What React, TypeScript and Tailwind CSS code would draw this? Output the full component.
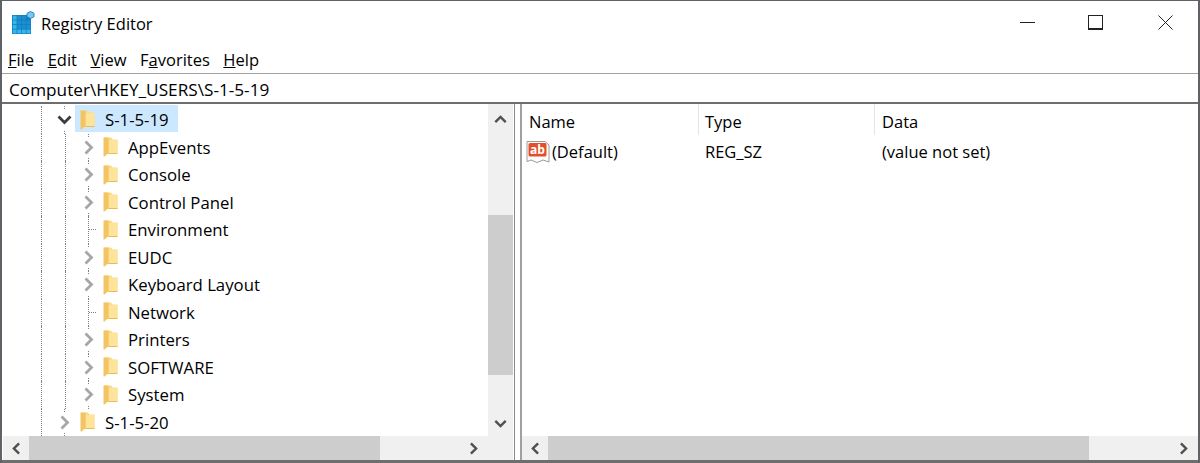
import type { ReactNode } from "react";

const font = "font-['Open_Sans','Noto_Sans',sans-serif]";

function Chevron({ dir, className }: { dir: "up" | "down" | "left" | "right"; className: string }) {
    const paths = {
        up: "M1.5 10.5 L7.5 4.5 L13.5 10.5",
        down: "M1.5 4.5 L7.5 10.5 L13.5 4.5",
        left: "M10.5 1.5 L4.5 7.5 L10.5 13.5",
        right: "M4.5 1.5 L10.5 7.5 L4.5 13.5",
    };
    return (
        <svg viewBox="0 0 15 15" className={className} fill="none" stroke="currentColor" strokeWidth="2.8">
            <path d={paths[dir]} />
        </svg>
    );
}

function Folder() {
    return (
        <svg viewBox="0 0 15 20" className="w-[15px] h-[20px] mr-[2px] shrink-0">
            <path d="M1 0.5 H8 L9.5 2.5 H14.5 V17 H1 Z" fill="#fbdb82" />
            <path d="M6 3 H14.5 V16.5 H6 Z" fill="#fde49a" />
            <path d="M0.5 0.5 H5.5 V16 L1.5 19.5 H0.5 Z" fill="#f3c464" />
            <path d="M5.5 16 H14.5 V17 H5.5 Z" fill="#e9bb5c" />
        </svg>
    );
}

function RegeditIcon() {
    const cells = [0, 1, 2, 3].flatMap((y) => [0, 1, 2, 3].map((x) => ({ x, y })));
    return (
        <svg viewBox="0 0 23 23" className="w-[23px] h-[23px] shrink-0 -mt-[3px]">
            <rect x="0" y="4" width="19" height="19" fill="#0f7fc0" />
            {cells
                .filter((c) => !(c.x === 3 && c.y === 0))
                .map((c) => (
                    <rect
                        key={`${c.x}-${c.y}`}
                        x={0.8 + c.x * 4.6}
                        y={4.8 + c.y * 4.6}
                        width="3.8"
                        height="3.8"
                        fill={c.y === 3 || c.x === 0 ? "#38b6ec" : "#1d8fd0"}
                    />
                ))}
            <path d="M18.5 0.5 L22 2.3 V5.7 L18.5 7.5 L15 5.7 V2.3 Z" fill="#7cc8ec" stroke="#1b8ac8" strokeWidth="1" />
        </svg>
    );
}

function StringIcon() {
    return (
        <svg viewBox="0 0 24 24" className="w-[24px] h-[24px] shrink-0">
            <path d="M1 1.5 H19 L23 5 V22 L17 20 L11 22.5 L5 20 L1 21.5 Z" fill="#fff" stroke="#9a9a9a" strokeWidth="1" />
            <rect x="2.5" y="3" width="18" height="13.5" rx="1.5" fill="#e2502b" />
            <text x="11.5" y="14" textAnchor="middle" fontSize="12" fontWeight="700" fill="#fff" fontFamily="Open Sans">
                ab
            </text>
        </svg>
    );
}

function Expander({ type }: { type: "open" | "closed" | "none" }) {
    if (type === "none") {
        return (
            <div className="self-stretch w-[8px] ml-[8px] shrink-0 flex items-center border-l border-dotted border-[#808080]">
                <div className="w-full border-t border-dotted border-[#808080]" />
            </div>
        );
    }
    return (
        <div className="self-stretch w-[16px] shrink-0 flex flex-col items-center justify-between">
            <div className="h-[3px] w-0 border-l border-dotted border-[#808080] ml-px" />
            {type === "open" ? (
                <Chevron dir="down" className="w-[15px] h-[15px] text-[#3c3c3c]" />
            ) : (
                <Chevron dir="right" className="w-[15px] h-[15px] text-[#a6a6a6]" />
            )}
            <div className="h-[3px] w-0 border-l border-dotted border-[#808080] ml-px" />
        </div>
    );
}

function TreeRow({
    level,
    label,
    expander,
    selected,
}: {
    level: 1 | 2;
    label: string;
    expander: "open" | "closed" | "none";
    selected?: boolean;
}) {
    const body = (
        <>
            <span className="flex ml-[5px]">
                <Folder />
            </span>
            <span className={`ml-[8px] text-black ${selected ? "pr-[9px]" : "pr-[3px]"}`}>{label}</span>
        </>
    );
    return (
        <div className="flex items-center h-[27.5px] pl-[39px] text-[16.75px]">
            <div className={`self-stretch border-l border-dotted border-[#808080] ${level === 1 ? "w-[15px]" : "w-[24px]"}`} />
            {level === 2 && <div className="self-stretch w-[15px] border-l border-dotted border-[#808080]" />}
            <Expander type={expander} />
            {selected ? (
                <div className="flex items-center h-[27px] mb-[2px] pt-[2px] bg-[#cce8ff] ml-[3px]">{body}</div>
            ) : (
                <div className={`flex items-center ${level === 1 ? "ml-[3px]" : "ml-[2px]"}`}>{body}</div>
            )}
        </div>
    );
}

function ScrollTrack({ children, className }: { children: ReactNode; className: string }) {
    return <div className={`bg-[#f0f0f0] flex shrink-0 ${className}`}>{children}</div>;
}

const subkeys: { label: string; expander: "closed" | "none" }[] = [
    { label: "AppEvents", expander: "closed" },
    { label: "Console", expander: "closed" },
    { label: "Control Panel", expander: "closed" },
    { label: "Environment", expander: "none" },
    { label: "EUDC", expander: "closed" },
    { label: "Keyboard Layout", expander: "closed" },
    { label: "Network", expander: "none" },
    { label: "Printers", expander: "closed" },
    { label: "SOFTWARE", expander: "closed" },
    { label: "System", expander: "closed" },
];

export default function App() {
    return (
        <div className={`${font} w-[1200px] h-[463px] bg-white text-black text-[16.5px] flex flex-col overflow-hidden border-t border-[#5f6368] border-x-2`}>
            {/* title bar */}
            <div className="flex items-center h-[46px] shrink-0 pl-[10px]">
                <RegeditIcon />
                <span className="ml-[6px]">Registry Editor</span>
                <div className="ml-auto flex items-center h-full pb-[3px]">
                    <div className="w-[15px] border-t border-[#222] mr-[53px]" />
                    <div className="w-[15px] h-[15px] border border-b-2 border-[#222] mr-[55px]" />
                    <svg viewBox="0 0 15 15" className="w-[15px] h-[15px] mr-[25px]" stroke="#222" strokeWidth="1">
                        <path d="M0.5 0.5 L14.5 14.5 M14.5 0.5 L0.5 14.5" />
                    </svg>
                </div>
            </div>

            {/* menu */}
            <div className="flex items-center h-[26px] shrink-0 pl-[6px] gap-[13.5px]">
                <span><u>F</u>ile</span>
                <span><u>E</u>dit</span>
                <span><u>V</u>iew</span>
                <span>F<u>a</u>vorites</span>
                <span><u>H</u>elp</span>
            </div>

            {/* address bar */}
            <div className="flex items-center h-[31px] shrink-0 pl-[7px] pt-[3px] text-[17.2px] border-t border-[#a0a0a0] border-b-2 border-b-[#6e6e6e]">
                Computer\HKEY_USERS\S-1-5-19
            </div>

            <div className="flex flex-1 min-h-0 border-b-[3px] border-[#6e6e6e]">
                {/* tree pane */}
                <div className="flex flex-col w-[513px] shrink-0 pr-px border-r border-[#8a8a8a] min-h-0">
                    <div className="flex flex-1 min-h-0">
                        <div className="flex-1 min-w-0 overflow-hidden pt-[2px]">
                            <TreeRow level={1} label="S-1-5-19" expander="open" selected />
                            {subkeys.map((k) => (
                                <TreeRow key={k.label} level={2} label={k.label} expander={k.expander} />
                            ))}
                            <TreeRow level={1} label="S-1-5-20" expander="closed" />
                        </div>
                        <ScrollTrack className="flex-col w-[25px]">
                            <div className="h-[30px] flex items-center justify-center">
                                <Chevron dir="up" className="w-[13px] h-[13px] text-[#505050]" />
                            </div>
                            <div className="h-[81px]" />
                            <div className="h-[160px] bg-[#cdcdcd]" />
                            <div className="flex-1" />
                            <div className="h-[25px] flex items-center justify-center">
                                <Chevron dir="down" className="w-[13px] h-[13px] text-[#505050]" />
                            </div>
                        </ScrollTrack>
                    </div>
                    <ScrollTrack className="h-[24px] items-stretch ml-px">
                        <div className="w-[26px] flex items-center justify-center">
                            <Chevron dir="left" className="w-[13px] h-[13px] text-[#505050]" />
                        </div>
                        <div className="w-[351px] bg-[#cdcdcd]" />
                        <div className="flex-1" />
                        <div className="w-[25px] flex items-center justify-center mr-[25px] pr-[5px]">
                            <Chevron dir="right" className="w-[13px] h-[13px] text-[#505050]" />
                        </div>
                    </ScrollTrack>
                </div>

                {/* splitter */}
                <div className="w-[7px] shrink-0 border-r-2 border-[#a0a0a0]" />

                {/* values pane */}
                <div className="flex flex-col flex-1 min-w-0">
                    <div className="flex-1 min-h-0">
                        <div className="flex h-[34px] items-start">
                            <div className="w-[177px] h-[31px] flex items-center pl-[7px] pt-[6px] border-r border-[#e5e5e5]">Name</div>
                            <div className="w-[176px] h-[31px] flex items-center pl-[6px] pt-[6px] border-r border-[#e5e5e5]">Type</div>
                            <div className="flex-1 h-[31px] flex items-center pl-[7px] pt-[6px]">Data</div>
                        </div>
                        <div className="flex h-[28px] items-center">
                            <div className="w-[177px] flex items-center pl-[4px]">
                                <StringIcon />
                                <span className="ml-[2px]">(Default)</span>
                            </div>
                            <div className="w-[176px] pl-[6px]">REG_SZ</div>
                            <div className="flex-1 pl-[7px]">(value not set)</div>
                        </div>
                    </div>
                    <ScrollTrack className="h-[24px] items-stretch">
                        <div className="w-[26px] flex items-center justify-center">
                            <Chevron dir="left" className="w-[13px] h-[13px] text-[#505050]" />
                        </div>
                        <div className="w-[541px] bg-[#cdcdcd]" />
                        <div className="flex-1" />
                        <div className="w-[25px] flex items-center justify-center pr-[5px]">
                            <Chevron dir="right" className="w-[13px] h-[13px] text-[#505050]" />
                        </div>
                    </ScrollTrack>
                </div>
            </div>
        </div>
    );
}
